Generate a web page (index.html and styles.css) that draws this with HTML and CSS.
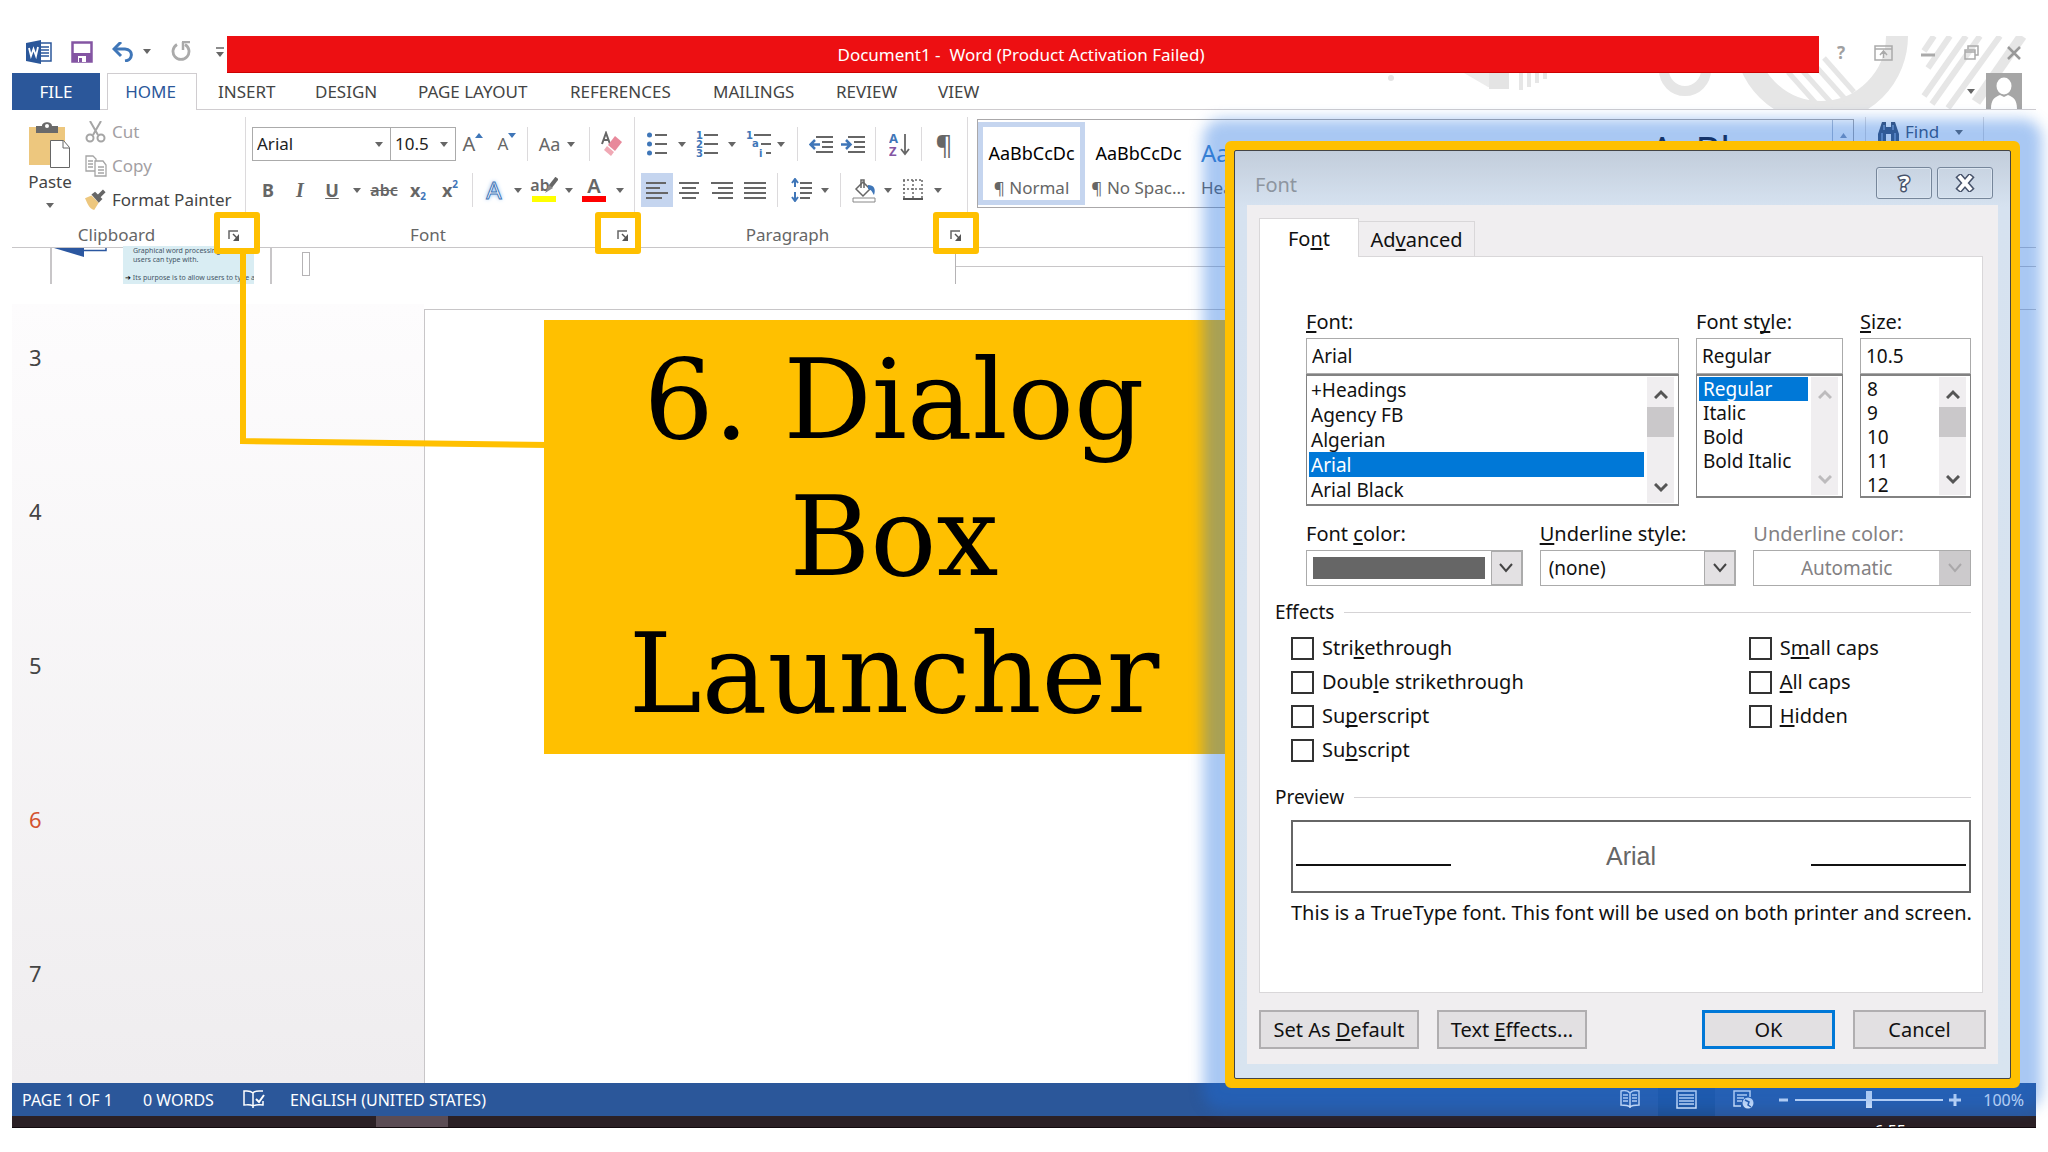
FILE: index.html
```html
<!DOCTYPE html>
<html lang="en">
<head>
<meta charset="utf-8">
<title>Document1 - Word</title>
<link rel="stylesheet" href="styles.css">
</head>
<body>
<svg class="defs" aria-hidden="true">
  <symbol id="caret" viewBox="0 0 8 5"><path d="M0 0h8L4 5z" fill="#666"/></symbol>
  <symbol id="launch" viewBox="0 0 12 11"><path d="M1 9V1h9" fill="none" stroke="#666" stroke-width="1.5"/><path d="M5 4l4 4" stroke="#555" stroke-width="1.5"/><path d="M11 4v7H5z" fill="#555"/></symbol>
  <symbol id="up" viewBox="0 0 14 10"><path d="M1 9l6-6 6 6" fill="none" stroke="currentColor" stroke-width="3"/></symbol>
  <symbol id="down" viewBox="0 0 14 10"><path d="M1 1l6 6 6-6" fill="none" stroke="currentColor" stroke-width="3"/></symbol>
  <symbol id="chev" viewBox="0 0 14 10"><path d="M1 1l6 7 6-7" fill="none" stroke="currentColor" stroke-width="2"/></symbol>
</svg>

<main class="app">
  <header class="titlebar">
    <svg class="swirls" viewBox="0 0 700 74" width="700" height="74" aria-hidden="true">
      <g fill="none" stroke="#e6e6e6">
        <circle cx="485" cy="0" r="76" stroke-width="22"/>
        <circle cx="349" cy="34" r="21" stroke-width="10"/>
        <path stroke-width="5" d="M452 36l32 36M464 32l34 38M476 26l34 38M488 22l30 34"/>
        <path stroke-width="6" d="M598 0l-10 15M614 0l-22 32M630 0l-42 60M644 0l-48 68M664 0l-52 72"/>
        <path stroke-width="10" d="M686 0l-46 66"/>
        <path stroke-width="4" d="M185 37v17M193 37v14M201 37v10M209 37v6"/>
      </g>
      <path d="M128 37h44v16l-20-2z" fill="#ececec"/><path d="M153 37h20v16h-20z" fill="#e4e4e4"/><circle cx="55" cy="42" r="3" fill="#e4e4e4"/>
    </svg>
    <div class="quick">
      <svg class="q-word" width="26" height="24" viewBox="0 0 26 24"><path d="M12 3h13v18H12z" fill="#fff" stroke="#2b579a" stroke-width="1.5"/><path d="M15 7h8M15 10h8M15 13h8M15 16h8" stroke="#2b579a" stroke-width="1.5"/><path d="M0 3l15-3v24L0 21z" fill="#2b579a"/><path d="M3 8l2 8 2.500-7 2.500 7 2-9" fill="none" stroke="#fff" stroke-width="1.800"/></svg>
      <button aria-label="Save"><svg width="22" height="22" viewBox="0 0 22 22"><path d="M1.500 1.500h19v19h-19z" fill="#fff" stroke="#8455a3" stroke-width="2.500"/><path d="M2 12h18v9H2z" fill="#8455a3"/><path d="M7 15h8v6H7z" fill="#fff"/><path d="M8 17h3v4H8z" fill="#8455a3"/></svg></button>
      <button aria-label="Undo"><svg width="22" height="20" viewBox="0 0 22 20"><path d="M3 7h10c9 1 8 11 0 12" fill="none" stroke="#3f76b8" stroke-width="3"/><path d="M9 0L2 7l7 7" fill="none" stroke="#3f76b8" stroke-width="3"/></svg></button>
      <svg class="caret" width="8" height="5"><use href="#caret"/></svg>
      <button class="q-redo" aria-label="Repeat"><svg width="20" height="21" viewBox="0 0 20 21"><path d="M6 3.500A8 8 0 1 0 14 3.500" fill="none" stroke="#aaa" stroke-width="2.800"/><path d="M11 1h8M12 1v8" fill="none" stroke="#aaa" stroke-width="2.500"/></svg></button>
      <button class="q-more" aria-label="Customize"><svg width="8" height="10" viewBox="0 0 8 10"><path d="M0 1h8" stroke="#666" stroke-width="1.500"/><path d="M0 5h8L4 10z" fill="#666"/></svg></button>
    </div>
    <h1 class="doc-title">Document1 -&nbsp; Word (Product Activation Failed)</h1>
    <div class="win-buttons">
      <button class="win-help" aria-label="Help">?</button>
      <button aria-label="Ribbon display"><svg width="19" height="16" viewBox="0 0 19 16"><path d="M1 1h17v14H1zM1 4h17M9.500 13V7M6 10l3.500-4L13 10" fill="none" stroke="#aaa" stroke-width="1.500"/></svg></button>
      <button aria-label="Minimize"><svg width="14" height="16"><path d="M0 10h14" stroke="#aaa" stroke-width="3"/></svg></button>
      <button aria-label="Restore"><svg width="15" height="15" viewBox="0 0 15 15"><path d="M4 4V1h10v9h-3M1 5h10v9H1zM1 7h10" fill="none" stroke="#aaa" stroke-width="1.500"/></svg></button>
      <button aria-label="Close"><svg width="14" height="14"><path d="M1 1l12 12M13 1L1 13" stroke="#999" stroke-width="2.500"/></svg></button>
    </div>
  </header>

  <nav class="tabs">
    <a class="tab file" href="#">FILE</a>
    <a class="tab active" href="#">HOME</a>
    <a class="tab t-insert" href="#">INSERT</a>
    <a class="tab t-design" href="#">DESIGN</a>
    <a class="tab t-layout" href="#">PAGE LAYOUT</a>
    <a class="tab t-refs" href="#">REFERENCES</a>
    <a class="tab t-mail" href="#">MAILINGS</a>
    <a class="tab t-review" href="#">REVIEW</a>
    <a class="tab t-view" href="#">VIEW</a>
    <div class="account">
      <svg width="8" height="5"><use href="#caret"/></svg>
      <svg width="36" height="36" viewBox="0 0 36 36"><path d="M0 0h36v36H0z" fill="#a6a6a6"/><ellipse cx="18" cy="13" rx="7.500" ry="8.500" fill="#fff"/><path d="M5 36c0-10 4-12 9-14l4 2 4-2c5 2 9 4 9 14z" fill="#fff"/></svg>
    </div>
  </nav>

  <section class="ribbon">
    <div class="group g-clip">
      <div class="clip-body">
        <button class="paste">
          <svg width="42" height="46" viewBox="0 0 42 46"><path d="M0 5h36v38H0z" fill="#edc77e"/><path d="M7 4h6c0-5 10-5 10 0h6v7H7z" fill="#6a6a6a"/><circle cx="18" cy="4" r="2" fill="#fff"/><path d="M21.500 18.500h13l6 7v20h-19z" fill="#fff" stroke="#666"/><path d="M34 19v7h6" fill="none" stroke="#666"/></svg>
          <span>Paste</span>
          <svg class="caret" width="8" height="5"><use href="#caret"/></svg>
        </button>
        <div class="clip-list">
          <button class="off"><svg width="22" height="22" viewBox="0 0 22 22"><g fill="none" stroke="#a5a5a5" stroke-width="2"><path d="M5 0l8 14M16 0L8 14"/><circle cx="5" cy="17" r="3.500"/><circle cx="16" cy="17" r="3.500"/></g></svg>Cut</button>
          <button class="off"><svg width="22" height="22" viewBox="0 0 22 22"><g fill="#fff" stroke="#a5a5a5" stroke-width="1.300"><path d="M1 1h7l3 3v12H1z"/><path d="M10 6h8l3 4v11H10z"/><path d="M3 6h5M3 9h5M3 12h5M13 12h6M13 15h6M13 18h6"/></g></svg>Copy</button>
          <button><svg width="22" height="22" viewBox="0 0 24 22"><path d="M0 9l7-3 8 8-5 8C4 20 3 15 0 9z" fill="#edc77e"/><path d="M7 5l4-3 8 8-4 4z" fill="#666"/><path d="M15 7l6-6" stroke="#666" stroke-width="4"/></svg>Format Painter</button>
        </div>
      </div>
      <div class="group-name">Clipboard</div>
      <button class="launcher" aria-label="Clipboard settings"><svg width="12" height="11"><use href="#launch"/></svg></button>
    </div>

    <div class="group g-font">
      <div class="row font-1">
        <label class="combo"><select aria-label="Font"><option>Arial</option></select><svg width="8" height="5"><use href="#caret"/></svg></label>
        <label class="combo"><select aria-label="Font size"><option>10.5</option></select><svg width="8" height="5"><use href="#caret"/></svg></label>
        <button class="tool grow">A<svg width="8" height="5" viewBox="0 0 8 5"><path d="M0 5h8L4 0z" fill="#3f76b8"/></svg></button>
        <button class="tool shrink">A<svg width="8" height="5" viewBox="0 0 8 5"><path d="M0 0h8L4 5z" fill="#3f76b8"/></svg></button>
        <i class="sep"></i>
        <button class="tool case">Aa<svg width="8" height="5"><use href="#caret"/></svg></button>
        <i class="sep"></i>
        <button class="tool" aria-label="Clear formatting"><svg width="22" height="26" viewBox="0 0 22 26"><path d="M1 13L5 2l4 11M2 9h6" fill="none" stroke="#666" stroke-width="2"/><path d="M14 5l7 6-7 9-7-6z" fill="#e8899b"/><path d="M6 15l7 6-3 4-7-6z" fill="#f0a9b5"/></svg></button>
      </div>
      <div class="row font-2">
        <button class="tool b">B</button><button class="tool i">I</button><button class="tool u">U</button>
        <svg class="caret" width="8" height="5"><use href="#caret"/></svg>
        <button class="tool s">abc</button><button class="tool b">x<sub>2</sub></button><button class="tool b">x<sup>2</sup></button>
        <i class="sep"></i>
        <button class="tool fx">A</button>
        <svg class="caret" width="8" height="5"><use href="#caret"/></svg>
        <button class="tool hl"><span>ab</span><svg width="14" height="16" viewBox="0 0 14 16"><path d="M13 1L6 10" stroke="#666" stroke-width="4"/><path d="M5 8l4 3-8 5z" fill="#888"/></svg></button>
        <svg class="caret" width="8" height="5"><use href="#caret"/></svg>
        <button class="tool fc">A</button>
        <svg class="caret" width="8" height="5"><use href="#caret"/></svg>
      </div>
      <div class="group-name">Font</div>
      <button class="launcher" aria-label="Font settings"><svg width="12" height="11"><use href="#launch"/></svg></button>
    </div>

    <div class="group g-para">
      <div class="row para-1">
        <button class="tool" aria-label="Bullets"><svg width="20" height="24" viewBox="0 0 20 24"><g fill="#3f76b8"><circle cx="2.500" cy="3" r="2.500"/><circle cx="2.500" cy="12" r="2.500"/><circle cx="2.500" cy="21" r="2.500"/></g><path d="M8 3h12M8 12h12M8 21h12" stroke="#666" stroke-width="1.800"/></svg></button>
        <svg class="caret" width="8" height="5"><use href="#caret"/></svg>
        <button class="tool" aria-label="Numbering"><svg width="22" height="26" viewBox="0 0 22 26"><g class="num"><text x="0" y="8">1</text><text x="0" y="17">2</text><text x="0" y="26">3</text></g><path d="M8 4h14M8 13h14M8 22h14" stroke="#666" stroke-width="1.800"/></svg></button>
        <svg class="caret" width="8" height="5"><use href="#caret"/></svg>
        <button class="tool" aria-label="Multilevel list"><svg width="25" height="26" viewBox="0 0 25 26"><g class="num"><text x="0" y="8">1</text><text x="6" y="16">a</text><text x="13" y="26">i</text></g><path d="M8 4h17M15 13h10M20 22h5" stroke="#666" stroke-width="1.800"/></svg></button>
        <svg class="caret" width="8" height="5"><use href="#caret"/></svg>
        <i class="sep"></i>
        <button class="tool" aria-label="Decrease indent"><svg width="24" height="18" viewBox="0 0 24 18"><path d="M7 2h17M13 7h11M13 12h11M7 17h17" stroke="#666" stroke-width="1.800"/><path d="M11 9.500H2M6 5L1.500 9.500 6 14" fill="none" stroke="#3f76b8" stroke-width="2.500"/></svg></button>
        <button class="tool" aria-label="Increase indent"><svg width="24" height="18" viewBox="0 0 24 18"><path d="M7 2h17M13 7h11M13 12h11M7 17h17" stroke="#666" stroke-width="1.800"/><path d="M0 9.500h9M5 5l4.500 4.500L5 14" fill="none" stroke="#3f76b8" stroke-width="2.500"/></svg></button>
        <i class="sep"></i>
        <button class="tool" aria-label="Sort"><svg width="21" height="26" viewBox="0 0 21 26"><g class="sort"><text x="0" y="12" fill="#3f76b8">A</text><text x="0" y="25" fill="#8455a3">Z</text></g><path d="M16 3v19M12 18l4 5 4-5" fill="none" stroke="#666" stroke-width="1.800"/></svg></button>
        <i class="sep"></i>
        <button class="tool pil">¶</button>
      </div>
      <div class="row para-2">
        <button class="tool on" aria-label="Align left"><svg width="22" height="18"><path d="M0 2h20M0 7h14M0 12h22M0 17h16" stroke="#666" stroke-width="1.800"/></svg></button>
        <button class="tool" aria-label="Center"><svg width="22" height="18"><path d="M1 2h20M4 7h14M1 12h20M4 17h14" stroke="#666" stroke-width="1.800"/></svg></button>
        <button class="tool" aria-label="Align right"><svg width="22" height="18"><path d="M0 2h22M7 7h15M1 12h21M7 17h15" stroke="#666" stroke-width="1.800"/></svg></button>
        <button class="tool" aria-label="Justify"><svg width="22" height="18"><path d="M0 2h22M0 7h22M0 12h22M0 17h22" stroke="#666" stroke-width="1.800"/></svg></button>
        <i class="sep"></i>
        <button class="tool" aria-label="Line spacing"><svg width="21" height="24" viewBox="0 0 21 24"><path d="M9 5h12M9 10h12M9 15h12M9 20h10" stroke="#666" stroke-width="1.800"/><path d="M4 2v7M4 14v8M1 5l3-4 3 4M1 19l3 4 3-4" fill="none" stroke="#3f76b8" stroke-width="2"/></svg></button>
        <svg class="caret" width="8" height="5"><use href="#caret"/></svg>
        <i class="sep"></i>
        <button class="tool" aria-label="Shading"><svg width="24" height="25" viewBox="0 0 24 25"><path d="M4 11l7-7 7 7-7 7z" fill="#fff" stroke="#666" stroke-width="1.500"/><path d="M9 10V2h3v8" fill="none" stroke="#666" stroke-width="1.500"/><path d="M16 7c6 0 8 4 6 10-2-3-2-5-6-6z" fill="#3f76b8"/><path d="M1 20h22v4H1z" fill="#fff" stroke="#888"/></svg></button>
        <svg class="caret" width="8" height="5"><use href="#caret"/></svg>
        <button class="tool" aria-label="Borders"><svg width="20" height="22" viewBox="0 0 20 22"><path d="M0 1h20M0 10h20M1 1v18M10 1v18M19 1v18" stroke="#666" stroke-width="1.500" stroke-dasharray="2 2"/><path d="M0 20h20" stroke="#555" stroke-width="2"/></svg></button>
        <svg class="caret" width="8" height="5"><use href="#caret"/></svg>
      </div>
      <div class="group-name">Paragraph</div>
      <button class="launcher" aria-label="Paragraph settings"><svg width="12" height="11"><use href="#launch"/></svg></button>
    </div>

    <div class="group g-styles">
      <div class="gallery">
        <button class="style on"><b>AaBbCcDc</b><span>¶ Normal</span></button>
        <button class="style"><b>AaBbCcDc</b><span>¶ No Spac...</span></button>
        <button class="style head"><b>AaBbCc</b><span>Heading 1</span></button>
        <button class="style title"><b>AaBl</b></button>
        <button class="gal-up" aria-label="Scroll styles"><svg width="7" height="5" viewBox="0 0 7 5"><path d="M0 5h7L3.500 0z" fill="#8a9ab5"/></svg></button>
      </div>
    </div>
    <div class="group g-edit">
      <button class="find"><svg width="21" height="20" viewBox="0 0 21 20"><path d="M4 0h4v5h5V0h4l4 12v8h-8v-8h-5v8H0v-8z" fill="#3d4f6d"/><path d="M4 11v8M17 11v8M6 3v5M15 3v5" stroke="#a9c8f3"/></svg>Find<svg width="8" height="5"><use href="#caret"/></svg></button>
    </div>
  </section>

  <section class="strip">
    <div class="strip-thumb">
      <svg width="54" height="10" viewBox="0 0 54 10"><path d="M0 0h30v9z" fill="#2b57a0"/><path d="M28 2.500h24V0" fill="none" stroke="#2b57a0" stroke-width="1.500"/></svg>
      <p>Graphical word processing,<br>users can type with.<br><br><span>➔</span> Its purpose is to allow users to type and</p>
    </div>
    <div class="strip-page"></div>
    <div class="strip-doc"></div>
  </section>

  <section class="workspace">
    <ol class="slides">
      <li>3</li><li>4</li><li>5</li><li class="current">6</li><li>7</li>
    </ol>
    <div class="sheet"></div>
  </section>

  <footer class="status">
    <span class="st-page">PAGE 1 OF 1</span><span class="st-words">0 WORDS</span>
    <svg width="22" height="19" viewBox="0 0 22 19"><path d="M10 16c-3-2-6-1-9-1V1c3 0 6-1 9 2 2-3 6-2 10-2M10 3v15M20 11v4c-4 0-6-1-10 1" fill="none" stroke="#fff" stroke-width="1.500"/><path d="M13 9l3 3 5-7" fill="none" stroke="#fff" stroke-width="2"/></svg>
    <span class="st-lang">ENGLISH (UNITED STATES)</span>
    <div class="views">
      <button aria-label="Read mode"><svg width="20" height="19" viewBox="0 0 20 19"><path d="M1 1c4-1 7 0 9 2 2-2 5-3 9-2v14c-4 0-7 0-9 2-2-2-5-2-9-2zM10 3v15M3 5h5M3 8h5M3 11h5M12 5h5M12 8h5M12 11h5" fill="none" stroke="#fff" stroke-width="1.500"/></svg></button>
      <button class="on" aria-label="Print layout"><svg width="21" height="19" viewBox="0 0 21 19"><path d="M1 1h19v17H1zM3 5h15M3 8h15M3 11h15M3 14h15" fill="none" stroke="#fff" stroke-width="1.500"/></svg></button>
      <button aria-label="Web layout"><svg width="21" height="19" viewBox="0 0 21 19"><path d="M8 16H1V1h16v6M4 5h10M4 8h7M4 11h5" fill="none" stroke="#fff" stroke-width="1.500"/><circle cx="15" cy="13" r="5.500" fill="#fff"/><path d="M12 10l4 2-1 3 3 2" fill="none" stroke="#2b579a" stroke-width="1.500"/></svg></button>
    </div>
    <svg class="sign" width="12" height="12"><path d="M2 6h9" stroke="#fff" stroke-width="3"/></svg>
    <input class="zoom" type="range" aria-label="Zoom" value="50">
    <svg class="sign" width="12" height="12"><path d="M0 6h12M6 0v12" stroke="#fff" stroke-width="3"/></svg>
    <span class="st-zoom">100%</span>
  </footer>
  <div class="taskbar"><i></i><time>6:55</time></div>

  <svg class="connector" width="320" height="200" viewBox="0 0 320 200" aria-hidden="true"><path d="M15 0v187l305 4" fill="none" stroke="#ffc000" stroke-width="6"/></svg>
  <div class="callout">6. Dialog<br>Box<br>Launcher</div>

  <section class="dialog" role="dialog" aria-label="Font">
    <div class="frame">
      <header class="dlg-head">
        <h2>Font</h2>
        <button aria-label="Help"><svg width="18" height="24" viewBox="0 0 18 24"><text x="4" y="20" class="glyph">?</text></svg></button>
        <button aria-label="Close"><svg width="20" height="18" viewBox="0 0 20 18"><path d="M3 1l14 16M17 1L3 17" stroke="#47536b" stroke-width="7"/><path d="M4 2l12 14M16 2L4 16" stroke="#fff" stroke-width="4"/></svg></button>
      </header>
      <div class="dlg-body">
        <div class="dlg-tabs" role="tablist">
          <button class="on" role="tab">Fo<u>n</u>t</button><button role="tab">Ad<u>v</u>anced</button>
        </div>
        <div class="panel">
          <div class="fields">
            <div class="field">
              <label for="fname"><u>F</u>ont:</label>
              <input id="fname" value="Arial">
              <div class="list tall">
                <select size="5" aria-label="Fonts"><option>+Headings</option><option>Agency FB</option><option>Algerian</option><option selected>Arial</option><option>Arial Black</option></select>
                <div class="bar"><svg width="14" height="10"><use href="#up"/></svg><i></i><svg width="14" height="10"><use href="#down"/></svg></div>
              </div>
            </div>
            <div class="field">
              <label for="fstyle">Font st<u>y</u>le:</label>
              <input id="fstyle" value="Regular">
              <div class="list">
                <select size="5" aria-label="Font styles"><option selected>Regular</option><option>Italic</option><option>Bold</option><option>Bold Italic</option></select>
                <div class="bar dim"><svg width="14" height="10"><use href="#up"/></svg><svg width="14" height="10"><use href="#down"/></svg></div>
              </div>
            </div>
            <div class="field">
              <label for="fsize"><u>S</u>ize:</label>
              <input id="fsize" value="10.5">
              <div class="list">
                <select size="5" aria-label="Sizes"><option>8</option><option>9</option><option>10</option><option>11</option><option>12</option></select>
                <div class="bar"><svg width="14" height="10"><use href="#up"/></svg><i></i><svg width="14" height="10"><use href="#down"/></svg></div>
              </div>
            </div>
          </div>
          <div class="fields colors">
            <div class="field">
              <label for="fcolor">Font <u>c</u>olor:</label>
              <div class="drop swatch"><button id="fcolor" aria-label="Font color"></button><span><svg width="14" height="10"><use href="#chev"/></svg></span></div>
            </div>
            <div class="field">
              <label for="ustyle"><u>U</u>nderline style:</label>
              <div class="drop"><select id="ustyle"><option>(none)</option></select><span><svg width="14" height="10"><use href="#chev"/></svg></span></div>
            </div>
            <div class="field dim">
              <label for="ucolor">Underline color:</label>
              <div class="drop"><select id="ucolor" disabled><option>Automatic</option></select><span><svg width="14" height="10"><use href="#chev"/></svg></span></div>
            </div>
          </div>
          <h3 class="rule effects">Effects</h3>
          <div class="checks">
            <div>
              <label><input type="checkbox"><span>Stri<u>k</u>ethrough</span></label>
              <label><input type="checkbox"><span>Doub<u>l</u>e strikethrough</span></label>
              <label><input type="checkbox"><span>Su<u>p</u>erscript</span></label>
              <label><input type="checkbox"><span>Su<u>b</u>script</span></label>
            </div>
            <div>
              <label><input type="checkbox"><span>S<u>m</u>all caps</span></label>
              <label><input type="checkbox"><span><u>A</u>ll caps</span></label>
              <label><input type="checkbox"><span><u>H</u>idden</span></label>
            </div>
          </div>
          <h3 class="rule preview-h">Preview</h3>
          <div class="preview"><i></i><span>Arial</span><i></i></div>
          <p class="note">This is a TrueType font. This font will be used on both printer and screen.</p>
        </div>
        <div class="actions">
          <button class="w-set">Set As <u>D</u>efault</button><button class="w-fx">Text <u>E</u>ffects...</button>
          <button class="ok">OK</button><button>Cancel</button>
        </div>
      </div>
    </div>
  </section>
</main>
</body>
</html>
```
FILE: styles.css
```css
* { box-sizing: border-box; }
body { margin: 0; background: #fff; color: #444; font: 17px/24px "Noto Sans", "Open Sans", sans-serif; overflow: hidden; }
button, input, select { font: inherit; color: inherit; border: 0; background: none; padding: 0; margin: 0; border-radius: 0; outline: 0; }
a { color: inherit; text-decoration: none; }
h1, h2, h3, p, ol { margin: 0; padding: 0; font-weight: 400; font-size: inherit; }
svg { display: block; flex: none; }
u { text-underline-offset: 2px; text-decoration-thickness: 2px; text-decoration-skip-ink: none; }
.defs { position: absolute; width: 0; height: 0; }

.app { position: relative; display: flex; flex-direction: column; min-height: calc(100vh - 60px); margin: 36px 12px 24px; }

/* title bar */
.titlebar { display: flex; height: 37px; }
.swirls { position: absolute; right: 0; top: 0; }
.quick { display: flex; align-items: center; width: 215px; padding: 0 6px 6px 14px; gap: 19px; flex: none; }
.quick .caret { margin-left: -10px; }
.quick .q-redo { margin-left: 1px; }
.quick .q-more { margin-left: 6px; }
.doc-title { position: relative; flex: 1; padding-right: 4px; background: #ed0f12; border-bottom: 1px solid #c00; color: #fff; text-align: center; line-height: 38px; }
.win-buttons { position: relative; display: flex; align-items: center; justify-content: space-between; width: 217px; padding: 0 15px 4px 18px; flex: none; }
.win-help { color: #a0a0a0; font-weight: 700; }

/* ribbon tabs */
.tabs { display: flex; height: 37px; border-bottom: 1px solid #d0cdd0; position: relative; }
.tab { line-height: 38px; height: 37px; margin-right: 44px; white-space: nowrap; flex: none; }
.tab.file { width: 88px; margin-right: 7px; background: #2b579a; color: #fff; text-align: center; }
.tab.active { width: 90px; margin-right: 21px; padding-right: 3px; background: #fff; border: 1px solid #d0cdd0; border-bottom: 0; color: #2b579a; text-align: center; line-height: 36px; }
.t-insert { width: 53px; }
.t-design { width: 59px; }
.t-layout { width: 108px; }
.t-refs { width: 99px; }
.t-mail { width: 79px; }
.t-review { width: 58px; }
.account { display: flex; align-items: center; gap: 11px; margin-left: auto; padding-right: 14px; }

/* ribbon */
.ribbon { display: flex; height: 138px; border-bottom: 1px solid #c8c6c8; }
.group { position: relative; display: flex; flex-direction: column; padding: 17px 0 0 6px; flex: none; }
.group::after { content: ""; position: absolute; right: 0; top: 7px; bottom: 8px; width: 1px; background: #dcdadc; }
.g-clip { width: 234px; padding: 5px 0 0; }
.g-font { width: 389px; }
.g-para { width: 333px; }
.g-styles { flex: 1; padding: 9px 12px 0 9px; }
.g-edit { width: 118px; margin-right: 52px; padding: 7px 0 0 12px; }
.group-name { margin-top: auto; text-align: center; color: #666; }
.g-clip .group-name { padding-right: 25px; }
.g-font .group-name { padding-right: 31px; }
.g-para .group-name { padding-right: 34px; }
.launcher { position: absolute; right: -14px; bottom: -7px; width: 46px; height: 42px; border: 6px solid #ffc000; border-radius: 3px; background: #fff; z-index: 2; display: grid; place-items: center; padding: 5px 6px 0 0; }
.g-font .launcher, .g-para .launcher { right: -6px; padding: 5px 0 0 10px; }
.g-para .launcher { right: -11px; padding-left: 0; }
.clip-body { display: flex; }
.paste { display: flex; flex-direction: column; align-items: center; width: 54px; margin-left: 11px; padding-top: 7px; line-height: 28px; flex: none; }
.paste .caret { margin-top: 7px; }
.clip-list { display: flex; flex-direction: column; padding-left: 8px; }
.clip-list button { display: flex; align-items: center; gap: 5px; height: 34px; white-space: nowrap; text-align: left; }
.clip-list .off { color: #a3a0a3; }
.row { display: grid; height: 34px; margin-bottom: 12px; align-items: stretch; }
.font-1 { grid-template-columns: 139px 65px 34px 34px 6px 54px 10px 36px; }
.font-2 { grid-template-columns: 32px 32px 32px 18px 36px 32px 32px 12px 32px 16px 36px 14px 36px 16px; }
.para-1 { grid-template-columns: 32px 18px 32px 18px 34px 12px 20px 28px 36px 8px 40px 4px 42px; }
.para-2 { grid-template-columns: 32px 32px 34px 32px 12px 36px 12px 18px 30px 18px 32px 18px; }
.row .caret { place-self: center; }
.sep { width: 1px; background: #dcdadc; justify-self: center; }
.combo { position: relative; display: flex; border: 1px solid #ababab; color: #222; }
.combo + .combo { border-left: 0; }
.combo select { appearance: none; flex: 1; min-width: 0; padding-left: 4px; }
.combo svg { position: absolute; right: 7px; top: 14px; }
.tool { display: flex; align-items: center; justify-content: center; color: #666; }
.tool.on { background: #c5d5ef; }
.grow { font-size: 20px; }
.grow svg, .shrink svg { align-self: flex-start; margin-top: 6px; }
.case { font-size: 18px; gap: 7px; }
.b, .u { font-weight: 700; font-size: 18px; }
.u { text-decoration: underline; }
.i { font: italic 700 20px "Liberation Serif", serif; }
.s { font-weight: 600; font-size: 16px; text-decoration: line-through; }
sub, sup { font-size: 10px; line-height: 10px; color: #3f76b8; }
sub { align-self: flex-end; margin-bottom: 6px; }
sup { align-self: flex-start; margin-top: 6px; }
.fx { font-size: 24px; color: #fff; -webkit-text-stroke: 1px #3f76b8; text-shadow: 0 0 4px #6aa5e8; }
.hl { position: relative; font-weight: 600; font-size: 16px; line-height: 18px; padding-bottom: 10px; }
.hl svg { margin-left: -6px; }
.hl::after, .fc::after { content: ""; position: absolute; left: 6px; right: 6px; bottom: 5px; height: 6px; background: #ff0; }
.fc { position: relative; font-size: 20px; font-weight: 600; padding-bottom: 8px; }
.fc::after { background: #f00; }
.num { font: 700 10px "DejaVu Sans", sans-serif; fill: #3f76b8; }
.sort { font: 700 13px "Noto Sans", sans-serif; }
.pil { font-size: 26px; }
.gallery { display: flex; height: 89px; border: 1px solid #aaa8aa; position: relative; overflow: hidden; padding: 2px 0; }
.style { width: 107px; flex: none; display: flex; flex-direction: column; justify-content: space-between; align-items: center; padding: 14px 4px 0; overflow: hidden; border: 5px solid transparent; white-space: nowrap; }
.style b { font-weight: 400; font-size: 18px; color: #000; }
.style span { color: #666; }
.style.on { border-color: #c5d5ef; }
.style.head { align-items: flex-start; }
.style.head b { font-size: 24px; color: #3f86d0; }
.style.title { margin-left: 331px; width: 120px; padding-top: 2px; }
.style.title b { font-size: 38px; line-height: 40px; color: #112; }
.gal-up { position: absolute; right: 0; top: 0; width: 21px; height: 30px; border-left: 1px solid #b5bfd0; display: grid; place-items: center; }
.find { display: flex; align-items: center; gap: 6px; height: 30px; color: #3d4f6d; }
.find svg:last-child { margin-left: 10px; }

/* slice of the window behind */
.strip { display: flex; height: 36px; margin-bottom: 20px; }
.strip-thumb { display: flex; width: 222px; margin-left: 38px; border: solid #c8c6c8; border-width: 0 2px; gap: 15px; padding-left: 2px; flex: none; }
.strip-thumb p { width: 131px; overflow: hidden; background: #d9edf3; font-size: 7px; line-height: 9px; white-space: nowrap; padding-left: 10px; margin-top: -2px; color: #456; }
.strip-thumb span { color: #000; margin-left: -8px; }
.strip-page { width: 8px; height: 24px; margin: 4px 0 0 30px; border: 1px solid #b5b3b5; }
.strip-doc { flex: 1; margin-left: 645px; border-left: 1px solid #b5b3b5; background: linear-gradient(#c8c6c8, #c8c6c8) 0 18px / 100% 1px no-repeat; }

/* workspace */
.workspace { display: flex; flex: 1; }
.slides { list-style: none; width: 412px; padding-left: 17px; background: linear-gradient(#fdfcfd, #efedef); flex: none; font-size: 22px; }
.slides li { height: 154px; padding-top: 41px; }
.slides .current { color: #d35230; }
.slides li:last-child { height: auto; }
.sheet { flex: 1; margin-top: 5px; border: solid #c8c6c8; border-width: 1px 0 0 1px; }

/* status bar */
.status { display: flex; align-items: center; height: 33px; padding: 0 12px 0 10px; background: #2b579a; color: #fff; font-size: 16px; white-space: nowrap; }
.st-words { margin: 0 29px 0 30px; }
.st-lang { margin-left: 25px; }
.views { display: flex; height: 33px; margin: 0 5px 0 auto; }
.views button { width: 57px; display: grid; place-items: center; }
.views .on { background: #1f4e90; }
.zoom { appearance: none; width: 148px; height: 26px; margin: 0 6px; background: linear-gradient(#fff, #fff) 0 12px / 100% 2px no-repeat; }
.zoom::-webkit-slider-thumb { appearance: none; width: 6px; height: 17px; background: #fff; }
.st-zoom { margin-left: 22px; }
.taskbar { display: flex; height: 12px; overflow: hidden; background: #2b2025; border-bottom: 1px solid #120a0e; }
.taskbar i { width: 72px; margin-left: 364px; background: #5b4c54; }
.taskbar time { margin: 3px 130px 0 auto; font-size: 16px; color: #fff; }

/* annotations over the window */
.connector { position: absolute; left: 216px; top: 218px; }
.callout { position: absolute; left: 532px; top: 284px; width: 700px; height: 434px; padding-top: 12px; background: #ffc000; color: #000; text-align: center; font: 110px/137px "DejaVu Serif", serif; white-space: nowrap; }

/* dialog */
.dialog { position: absolute; right: 16px; top: 105px; width: 795px; border: 9px solid #ffc000; border-radius: 6px; box-shadow: 0 0 14px 22px rgba(29, 110, 223, .38); background: #ffc000; color: #111; z-index: 5; font-size: 20px; }
.frame { border: 1px solid #444; background: linear-gradient(#c2cddb, #d6e2f0 56px, #d8e4f0); padding: 0 12px 14px; border-radius: 2px; }
.dlg-head { display: flex; height: 54px; align-items: flex-start; padding: 16px 5px 0 8px; gap: 5px; }
.dlg-head h2 { flex: 1; line-height: 36px; color: #8d95a0; }
.dlg-head button { display: grid; place-items: center; width: 56px; height: 32px; border: 1px solid #76869a; border-radius: 3px; box-shadow: inset 0 0 0 1px #dbe5f0; }
.glyph { font: 700 22px "Noto Sans", sans-serif; fill: #fff; stroke: #47536b; stroke-width: 3px; paint-order: stroke; }
.dlg-body { background: #f0eef0; padding: 13px 12px 15px; }
.dlg-tabs { display: flex; align-items: flex-end; }
.dlg-tabs button { width: 116px; height: 35px; border: 1px solid #d9d7d9; border-bottom: 0; border-left: 0; padding-top: 2px; }
.dlg-tabs .on { width: 100px; height: 39px; background: #fff; margin-bottom: -1px; position: relative; border-left: 1px solid #d9d7d9; }
.panel { background: #fff; border: 1px solid #d9d7d9; margin-right: 3px; padding: 53px 11px 67px 15px; }
.fields { display: grid; grid-template-columns: 373fr 147fr 111fr; gap: 17px; padding-left: 31px; align-items: start; }
.fields.colors { grid-template-columns: 216fr 196fr 217fr; padding-top: 16px; }
.field { display: flex; flex-direction: column; min-width: 0; }
.field label { margin-bottom: 4px; white-space: nowrap; }
.field > input { height: 36px; border: 1px solid #ababab; padding-left: 5px; width: 100%; font-size: 19px; }
.list { display: flex; height: 124px; border: 1px solid #828282; border-width: 2px 1px; padding: 1px 4px 1px 2px; }
.list.tall { height: 132px; }
.list select { flex: 1; min-width: 0; height: 100%; overflow: hidden; scrollbar-width: none; font-size: 19px; }
.list option { height: 24px; line-height: 24px; min-height: 0; padding: 0 4px; display: flex; align-items: center; }
.list.tall option { height: 25px; padding: 0 2px; }
.list option:checked { background: #0078d7 linear-gradient(#0078d7, #0078d7); color: #fff; -webkit-text-fill-color: #fff; }
.bar { width: 27px; margin-left: 3px; background: #f0eef0; display: flex; flex-direction: column; align-items: center; padding: 12px 0 10px; color: #555; flex: none; }
.bar i { width: 27px; height: 30px; margin: 8px 0 auto; background: #cac8ca; }
.bar.dim { justify-content: space-between; color: #bdbbbd; }
.drop { display: flex; height: 36px; border: 1px solid #ababab; font-size: 19px; }
.drop select, .drop button { appearance: none; flex: 1; min-width: 0; padding-left: 8px; }
.drop span { width: 31px; border: 1px solid #ababab; background: #e3e1e3; display: grid; place-items: center; color: #444; }
.drop.swatch button { background: #666; margin: 6px; }
.dim { color: #838183; }
.dim .drop select { text-align: center; opacity: 1; padding-left: 0; color: #838183; }
.dim .drop span { background: #cccacc; color: #aaa8aa; border-color: #cccacc; }
.rule { display: flex; align-items: center; gap: 10px; margin-top: 14px; font-size: 19px; }
.rule::after { content: ""; flex: 1; height: 1px; background: #d5d3d5; }
.checks { display: grid; grid-template-columns: 457fr 222fr; padding: 7px 0 0 16px; }
.checks label { display: flex; align-items: center; gap: 8px; height: 34px; white-space: nowrap; }
.checks input { appearance: none; width: 23px; height: 23px; border: 2px solid #333; background: #fff; flex: none; }
.preview-h { margin-top: 18px; }
.preview { display: grid; grid-template-columns: 155px 1fr 155px; align-items: center; height: 73px; margin: 11px 0 8px 16px; padding: 0 3px; border: 2px solid #666; text-align: center; }
.preview i { height: 2px; background: #111; margin-top: 17px; }
.preview span { font: 25px "Liberation Sans", Arial, sans-serif; color: #666; }
.note { margin-left: 16px; white-space: nowrap; }
.actions { display: flex; gap: 18px; margin-top: 17px; }
.actions button { width: 133px; height: 39px; background: #e2e0e2; border: 2px solid #b0aeb0; }
.actions .w-set { width: 160px; }
.actions .w-fx { width: 150px; }
.actions .ok { margin-left: auto; border: 3px solid #0078d7; }
```
